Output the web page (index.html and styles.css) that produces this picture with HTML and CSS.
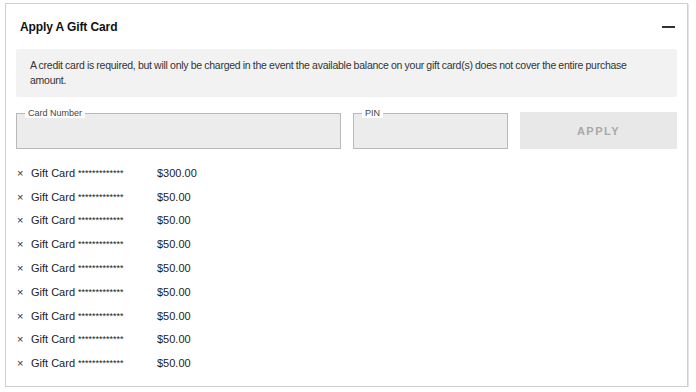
FILE: index.html
```html
<!DOCTYPE html>
<html lang="en">
<head>
  <meta charset="UTF-8">
  <title>Apply A Gift Card</title>
  <link rel="stylesheet" href="styles.css">
</head>
<body>

  <div class="panel">
    <!-- Header -->
    <div class="panel-head">
      <h2>Apply A Gift Card</h2>
      <span class="toggle"></span>
    </div>

    <div class="notice">
      A credit card is required, but will only be charged in the event the available balance on your gift card(s) does not cover the entire purchase amount.
    </div>

    <!-- Form -->
    <div class="fields">
      <fieldset class="field">
        <legend>Card Number</legend>
        <input type="text">
      </fieldset>
      <fieldset class="field">
        <legend>PIN</legend>
        <input type="text">
      </fieldset>
      <button class="apply" disabled>APPLY</button>
    </div>

    <!-- Applied cards -->
    <ul class="cards">
      <li><span class="remove">&times;</span><span class="name">Gift Card <span class="mask">*************</span></span><span class="amount">$300.00</span></li>
      <li><span class="remove">&times;</span><span class="name">Gift Card <span class="mask">*************</span></span><span class="amount">$50.00</span></li>
      <li><span class="remove">&times;</span><span class="name">Gift Card <span class="mask">*************</span></span><span class="amount">$50.00</span></li>
      <li><span class="remove">&times;</span><span class="name">Gift Card <span class="mask">*************</span></span><span class="amount">$50.00</span></li>
      <li><span class="remove">&times;</span><span class="name">Gift Card <span class="mask">*************</span></span><span class="amount">$50.00</span></li>
      <li><span class="remove">&times;</span><span class="name">Gift Card <span class="mask">*************</span></span><span class="amount">$50.00</span></li>
      <li><span class="remove">&times;</span><span class="name">Gift Card <span class="mask">*************</span></span><span class="amount">$50.00</span></li>
      <li><span class="remove">&times;</span><span class="name">Gift Card <span class="mask">*************</span></span><span class="amount">$50.00</span></li>
      <li><span class="remove">&times;</span><span class="name">Gift Card <span class="mask">*************</span></span><span class="amount">$50.00</span></li>
    </ul>
  </div>

</body>
</html>
```

FILE: styles.css
```css
body {
  margin: 0;
  padding: 3px 8px 0 5px;
  background: #fff;
  color: #222;
  font-family: "Liberation Sans", Arial, sans-serif;
}

.panel {
  border: 1px solid #cfcfcf;
  box-shadow: 1px 1px 0 #e4e4e4;
  height: 382px;
  padding: 0 10px;
}

.panel-head {
  display: flex;
  align-items: center;
  justify-content: space-between;
  height: 45px;
  padding-left: 4px;
}

.panel-head h2 {
  margin: 0;
  font-size: 12px;
  font-weight: bold;
  color: #111;
  letter-spacing: -0.1px;
}

.toggle {
  width: 13px;
  height: 2px;
  background: #333;
  margin-right: 2px;
}

.notice {
  background: #f2f2f2;
  border-radius: 2px;
  padding: 9px 12px 9px 14px;
  font-size: 10.5px;
  line-height: 15px;
  letter-spacing: -0.25px;
  word-spacing: -0.3px;
  color: #333;
}

.fields {
  display: grid;
  grid-template-columns: 325px 155px 1fr;
  gap: 12px;
  margin-top: 11px;
}

.field {
  margin: 0;
  padding: 0 8px;
  min-width: 0;
  height: 41px;
  box-sizing: border-box;
  border: 1px solid #b9b9b9;
  background: #ececec;
}

.field legend {
  font-size: 9px;
  color: #444;
  padding: 0 3px;
  background: #fff;
  line-height: 10px;
}

.field input {
  border: none;
  background: transparent;
  width: 100%;
  outline: none;
}

.apply {
  margin-top: 4px;
  height: 37px;
  border: none;
  background: #e8e8e8;
  color: #a9a9a9;
  font-family: "Liberation Sans", Arial, sans-serif;
  font-size: 11px;
  font-weight: bold;
  letter-spacing: 1.5px;
  padding-top: 1px;
}

.cards {
  list-style: none;
  margin: 12px 0 0;
  padding: 0;
}

.cards li {
  display: grid;
  grid-template-columns: 15px 126px auto;
  align-items: center;
  height: 23.8px;
  font-size: 11px;
  color: #222;
}

.remove {
  font-size: 11px;
  padding-left: 1px;
  color: #333;
}

.mask {
  font-size: 9px;
  vertical-align: 1px;
}
```
